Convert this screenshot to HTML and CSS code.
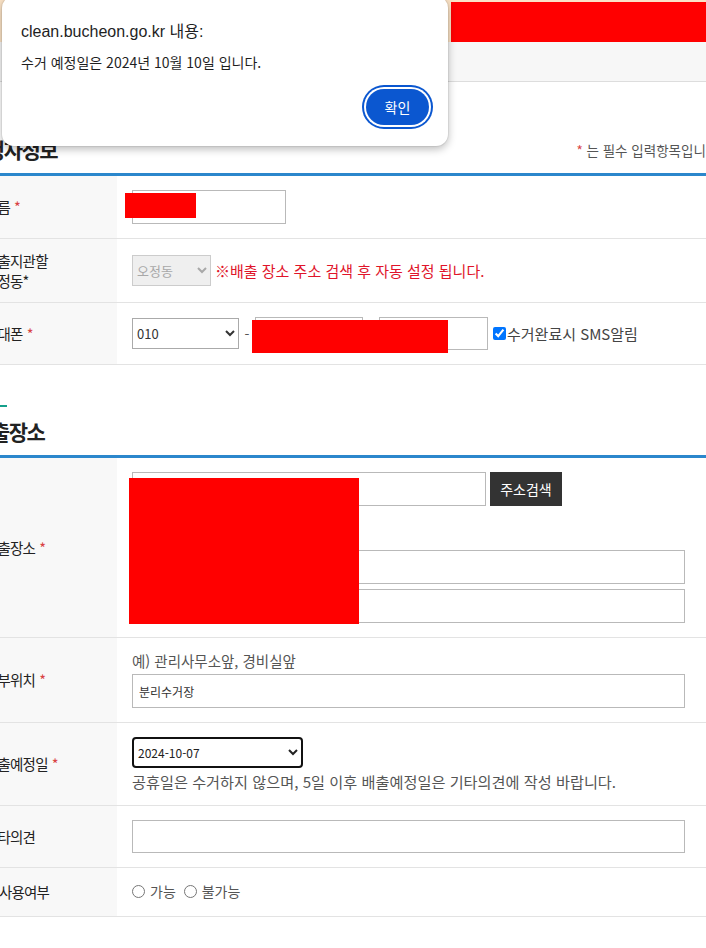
FILE: index.html
```html
<!DOCTYPE html>
<html lang="ko">
<head>
<meta charset="utf-8">
<title>대형폐기물 배출 신청</title>
<link rel="stylesheet" href="styles.css">
</head>
<body>
<header class="topbar">
  <div class="redact redact-head"></div>
</header>
<nav class="subnav"></nav>

<main class="content">
  <section class="sec sec-first">
    <div class="sec-mark"></div>
    <div class="sec-head">
      <h2 class="sec-title">신청자정보</h2>
      <p class="req-note"><span class="star">*</span> 는 필수 입력항목입니다.</p>
    </div>
    <table class="form">
      <tr>
        <th>이름<span class="star">*</span></th>
        <td class="rel">
          <input class="inp inp-name" type="text">
          <span class="redact r-name"></span>
        </td>
      </tr>
      <tr>
        <th class="two-line">배출지관할<br>행정동*</th>
        <td>
          <div class="line">
            <select class="sel sel-dong" disabled><option>오정동</option></select>
            <span class="warn">※배출 장소 주소 검색 후 자동 설정 됩니다.</span>
          </div>
        </td>
      </tr>
      <tr>
        <th>휴대폰<span class="star">*</span></th>
        <td class="rel">
          <div class="line">
            <select class="sel sel-phone"><option>010</option></select>
            <span class="dash">-</span>
            <input class="inp inp-phone" type="text">
            <span class="dash">-</span>
            <input class="inp inp-phone inp-phone2" type="text">
            <input class="chk" type="checkbox" checked>
            <span class="chk-label">수거완료시 SMS알림</span>
          </div>
          <span class="redact r-phone"></span>
        </td>
      </tr>
    </table>
  </section>

  <section class="sec">
    <div class="sec-mark"></div>
    <div class="sec-head">
      <h2 class="sec-title">배출장소</h2>
    </div>
    <table class="form">
      <tr>
        <th>배출장소<span class="star">*</span></th>
        <td class="rel">
          <div class="line">
            <input class="inp inp-addr" type="text">
            <button class="btn-search" type="button">주소검색</button>
          </div>
          <div class="addr-rest">
            <input class="inp inp-full" type="text">
            <input class="inp inp-full" type="text">
          </div>
          <span class="redact r-addr"></span>
        </td>
      </tr>
      <tr>
        <th>세부위치<span class="star">*</span></th>
        <td>
          <p class="hint">예) 관리사무소앞, 경비실앞</p>
          <input class="inp inp-full" type="text" value="분리수거장">
        </td>
      </tr>
      <tr>
        <th>배출예정일<span class="star">*</span></th>
        <td>
          <select class="sel sel-date"><option>2024-10-07</option></select>
          <p class="note">공휴일은 수거하지 않으며, 5일 이후 배출예정일은 기타의견에 작성 바랍니다.</p>
        </td>
      </tr>
      <tr>
        <th>기타의견</th>
        <td><input class="inp inp-full inp-memo" type="text"></td>
      </tr>
      <tr>
        <th class="th-plain">사용여부</th>
        <td class="td-radio">
          <label class="radio"><input type="radio" name="use">가능</label>
          <label class="radio"><input type="radio" name="use">불가능</label>
        </td>
      </tr>
    </table>
  </section>
</main>

<div class="dialog" role="alertdialog">
  <p class="dlg-title">clean.bucheon.go.kr 내용:</p>
  <p class="dlg-msg">수거 예정일은 2024년 10월 10일 입니다.</p>
  <div class="dlg-actions">
    <button class="dlg-btn" type="button">확인</button>
  </div>
</div>
</body>
</html>
```

FILE: styles.css
```css
* { box-sizing: border-box; }

html, body {
  margin: 0;
  padding: 0;
}

body {
  width: 706px;
  height: 948px;
  overflow: hidden;
  position: relative;
  background: #fff;
  color: #333;
  font-family: "Noto Sans CJK KR", "Noto Sans", sans-serif;
  font-size: 14px;
}

p, h2 { margin: 0; }

/* header */
.topbar {
  height: 42px;
  padding-top: 2px;
  background: #fbe3c6;
  display: flex;
  justify-content: flex-end;
}

.redact { background: #ff0000; }

.redact-head { width: 255px; }

.subnav {
  height: 40px;
  background: #f7f7f7;
  border-bottom: 1px solid #dddddd;
}

/* content */
.content {
  margin-left: -35px;
  width: 757px;
}

.sec { padding-top: 40px; }
.sec-first { padding-top: 41px; }

.sec-mark {
  width: 42px;
  height: 2px;
  background: #15a08b;
}

.sec-first .sec-mark { background: transparent; }

.sec-head {
  margin-top: 10px;
  margin-bottom: 10px;
  height: 28px;
  display: flex;
  align-items: center;
  justify-content: space-between;
}

.sec-title {
  padding-left: 8px;
  font-size: 21px;
  font-weight: 700;
  letter-spacing: -1.5px;
  line-height: 28px;
  color: #222;
}

.sec-first .sec-title { padding-left: 3px; }

.req-note {
  font-size: 13.5px;
  color: #555;
  line-height: 20px;
  padding-top: 2px;
}

.star { color: #d94343; }

/* form table */
.form {
  width: 100%;
  border-collapse: collapse;
  border-top: 3px solid #2b87cc;
}

.form tr { border-bottom: 1px solid #e3e3e3; }

.form th {
  width: 152px;
  padding: 0 0 0 20px;
  background: #f8f8f8;
  text-align: left;
  vertical-align: middle;
  font-weight: 400;
  font-size: 14.5px;
  letter-spacing: -0.8px;
  line-height: 20px;
  color: #222;
}

.form th .star { margin-left: 4px; }

.form th.two-line { padding-top: 11.5px; padding-bottom: 11.5px; }

.form th.th-plain { padding-left: 34px; }

.form td {
  padding: 14px 37px 14px 15px;
  vertical-align: middle;
}

.rel { position: relative; }

.line {
  display: flex;
  align-items: center;
}

.inp {
  display: block;
  height: 34px;
  border: 1px solid #b9b9b9;
  border-radius: 0;
  background: #fff;
  padding: 0 6px;
  font-family: inherit;
  font-size: 12px;
  color: #333;
  outline: none;
}

.inp-name { width: 154px; }

.inp-phone { width: 108px; height: 33px; }
.inp-phone2 { width: 109px; }

.inp-addr { width: 354px; }

.inp-full { width: 100%; }

.inp-memo { height: 33px; }

.sel {
  height: 31px;
  border: 1px solid #aaaaaa;
  border-radius: 0;
  background-color: #fff;
  font-family: inherit;
  font-size: 13px;
  color: #333;
  padding: 0;
}

.sel-phone { width: 107px; }

.sel-dong {
  width: 79px;
  background-color: #efefef;
  border-color: #cccccc;
  color: #a8a8a8;
  opacity: 1;
}

.sel-date {
  display: block;
  width: 171px;
  border: 2px solid #111;
  border-radius: 4px;
  font-size: 12px;
  color: #222;
}

.warn {
  margin-left: 4px;
  color: #e0142a;
  font-size: 15px;
}

.dash {
  width: 16px;
  text-align: center;
  color: #555;
}

.chk {
  width: 13px;
  height: 13px;
  margin: 0 1px 0 5px;
}

.chk-label {
  font-size: 15px;
  color: #444;
}

.btn-search {
  margin-left: 4px;
  width: 72px;
  height: 34px;
  border: none;
  background: #333333;
  color: #fff;
  font-family: inherit;
  font-size: 14px;
  padding: 0;
}

.addr-rest {
  margin-top: 44px;
  display: flex;
  flex-direction: column;
  gap: 5px;
}

.hint {
  font-size: 14.5px;
  line-height: 18px;
  color: #555;
  margin-bottom: 4px;
}

.note {
  margin-top: 3px;
  font-size: 15.2px;
  line-height: 20px;
  color: #555;
}

.td-radio {
  line-height: 19px;
  font-size: 14px;
  color: #555;
}

.radio {
  display: inline-flex;
  align-items: center;
  margin-right: 4px;
}

.radio input {
  width: 13px;
  height: 13px;
  margin: 0 5px 0 0;
}

/* redaction overlays */
.r-name { position: absolute; left: 8px; top: 17px; width: 71px; height: 25px; }
.r-phone { position: absolute; left: 135px; top: 17px; width: 196px; height: 33px; }
.r-addr { position: absolute; left: 12px; top: 20px; width: 230px; height: 146px; }

/* alert dialog */
.dialog {
  position: absolute;
  left: 2px;
  top: -4px;
  width: 446px;
  height: 150px;
  padding: 26px 19px 0 19px;
  background: #fff;
  border-radius: 12px;
  box-shadow: 0 3px 9px rgba(0, 0, 0, 0.28), 0 0 0 1px rgba(0, 0, 0, 0.05);
  display: flex;
  flex-direction: column;
}

.dlg-title {
  font-family: "Liberation Sans", "Noto Sans CJK KR", sans-serif;
  font-size: 16px;
  line-height: 20px;
  color: #1f1f1f;
}

.dlg-msg {
  margin-top: 11px;
  font-size: 14px;
  line-height: 18px;
  color: #1f1f1f;
}

.dlg-actions {
  margin-top: 18px;
  display: flex;
  justify-content: flex-end;
}

.dlg-btn {
  width: 63px;
  height: 36px;
  border: none;
  border-radius: 18px;
  background: #0b57d0;
  color: #fff;
  font-family: "Noto Sans CJK KR", sans-serif;
  font-size: 14px;
  padding: 0;
  box-shadow: 0 0 0 2px #fff, 0 0 0 4px #0b57d0;
}
```
